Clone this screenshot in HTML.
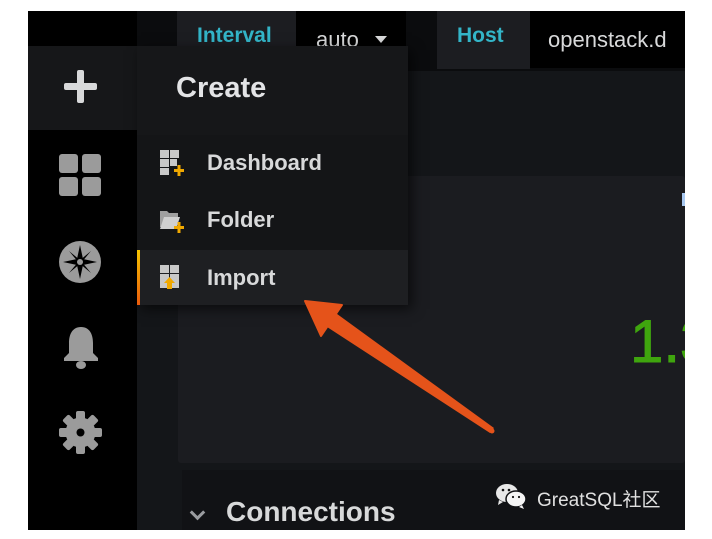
<!DOCTYPE html>
<html><head><meta charset="utf-8"><style>
*{margin:0;padding:0;box-sizing:border-box}
body{width:712px;height:539px;background:#fff;position:relative;overflow:hidden;font-family:"Liberation Sans",sans-serif}
.a{position:absolute}
.b{font-weight:bold}
</style></head><body>
<div class="a" style="left:28px;top:11px;width:657px;height:519px;background:#141619"></div>
<!-- top bar -->
<div class="a" style="left:137px;top:11px;width:548px;height:60px;background:#0b0c0e"></div>
<div class="a" style="left:177px;top:11px;width:119px;height:58px;background:#1c1d21"></div>
<div class="a b" style="left:197px;top:24px;color:#33b5c8;font-size:21px">Interval</div>
<div class="a" style="left:296px;top:11px;width:110px;height:58px;background:#000"></div>
<div class="a" style="left:316px;top:27px;color:#d8d9da;font-size:22px">auto</div>
<div class="a" style="left:375px;top:36px;width:0;height:0;border-left:6px solid transparent;border-right:6px solid transparent;border-top:7px solid #d8d9da"></div>
<div class="a" style="left:437px;top:11px;width:93px;height:58px;background:#1c1d21"></div>
<div class="a b" style="left:457px;top:24px;color:#33b5c8;font-size:21px">Host</div>
<div class="a" style="left:530px;top:11px;width:155px;height:57px;background:#000"></div>
<div class="a" style="left:548px;top:27px;color:#d8d9da;font-size:22px;white-space:nowrap;width:137px;overflow:hidden">openstack.d</div>
<!-- main panel -->
<div class="a" style="left:178px;top:176px;width:507px;height:287px;background:#1b1c20;border-radius:3px"></div>
<div class="a" style="left:682px;top:193px;width:3px;height:13px;background:#a8c8f0"></div>
<div class="a" style="left:630px;top:312px;color:#3fa50e;font-size:60px;line-height:60px;white-space:nowrap;width:55px;overflow:hidden;-webkit-text-stroke:1px #3fa50e">1.3</div>
<div class="a" style="left:182px;top:470px;width:503px;height:60px;background:#111215"></div>
<div class="a" style="left:192px;top:507px;width:11px;height:11px;border-right:3px solid #9a9ca0;border-bottom:3px solid #9a9ca0;transform:rotate(45deg)"></div>
<div class="a b" style="left:226px;top:496px;color:#d8d9da;font-size:28px">Connections</div>
<!-- sidebar -->
<div class="a" style="left:28px;top:11px;width:109px;height:519px;background:#000"></div>
<div class="a" style="left:28px;top:46px;width:109px;height:84px;background:#161719"></div>
<div class="a" style="left:64px;top:83px;width:33px;height:7px;background:#d8d9da;border-radius:2px"></div>
<div class="a" style="left:77px;top:70px;width:7px;height:33px;background:#d8d9da;border-radius:2px"></div>
<svg class="a" style="left:58px;top:153px" width="45" height="45"><g fill="#9b9b9b"><rect x="1" y="1" width="19" height="19" rx="3"/><rect x="24" y="1" width="19" height="19" rx="3"/><rect x="1" y="24" width="19" height="19" rx="3"/><rect x="24" y="24" width="19" height="19" rx="3"/></g></svg>
<svg class="a" style="left:58px;top:240px" width="44" height="44"><circle cx="22" cy="22" r="21" fill="#9b9b9b"/><path d="M22 5L25 19L39 22L25 25L22 39L19 25L5 22L19 19Z" fill="#000"/><path d="M11 11L23 21L33 33L21 23Z" fill="#000"/><path d="M33 11L23 23L11 33L21 21Z" fill="#000"/><circle cx="22" cy="22" r="3" fill="#9b9b9b"/></svg>
<svg class="a" style="left:62px;top:325px" width="38" height="45"><path d="M19 2C10 2 7 10 7 18L7 28L2 33L2 36L36 36L36 33L31 28L31 18C31 10 28 2 19 2Z" fill="#9b9b9b"/><ellipse cx="19" cy="40" rx="5" ry="4" fill="#9b9b9b"/></svg>
<svg class="a" style="left:58px;top:410px" width="45" height="45"><g fill="#9b9b9b"><circle cx="22.5" cy="22.5" r="15"/><rect x="18" y="1" width="9" height="43" rx="2"/><rect x="18" y="1" width="9" height="43" rx="2" transform="rotate(45 22.5 22.5)"/><rect x="18" y="1" width="9" height="43" rx="2" transform="rotate(90 22.5 22.5)"/><rect x="18" y="1" width="9" height="43" rx="2" transform="rotate(135 22.5 22.5)"/></g><circle cx="22.5" cy="22.5" r="4" fill="#000"/></svg>
<!-- menu -->
<div class="a" style="left:137px;top:46px;width:271px;height:259px;background:#141517;box-shadow:4px 4px 12px rgba(0,0,0,.6)"></div>
<div class="a" style="left:137px;top:46px;width:271px;height:89px;background:#161719"></div>
<div class="a b" style="left:176px;top:72px;color:#e3e4e6;font-size:29px">Create</div>
<div class="a" style="left:137px;top:250px;width:271px;height:55px;background:#1e1f22"></div>
<div class="a" style="left:137px;top:250px;width:3px;height:55px;background:linear-gradient(#f5c400,#eb5b0c)"></div>
<svg class="a" style="left:160px;top:150px" width="28" height="28"><g fill="#c8c8c8"><rect x="0" y="0" width="9" height="8"/><rect x="10" y="0" width="9" height="8"/><rect x="0" y="9" width="9" height="8"/><rect x="10" y="9" width="7" height="7"/><rect x="0" y="18" width="9" height="7"/></g><path d="M19 15v11M14 20.5h10" stroke="#f0a800" stroke-width="3"/></svg>
<div class="a b" style="left:207px;top:150px;color:#d8d9da;font-size:22px">Dashboard</div>
<svg class="a" style="left:160px;top:207px" width="28" height="28"><path d="M0 4h7l2 2h9v6H5L1 20H0Z" fill="#a0a0a0"/><path d="M4 10h16l-4 12H0Z" fill="#d0d0d0"/><path d="M19 15v11M14 20.5h10" stroke="#f0a800" stroke-width="3"/></svg>
<div class="a b" style="left:207px;top:207px;color:#d8d9da;font-size:22px">Folder</div>
<svg class="a" style="left:160px;top:265px" width="28" height="28"><g fill="#c8c8c8"><rect x="0" y="0" width="9" height="8"/><rect x="10" y="0" width="9" height="8"/><path d="M0 9h9v14H0Z"/><path d="M10 9h9v14h-9Z"/></g><path d="M9.5 12L4 18h3v6h5v-6h3Z" fill="#f0a800"/></svg>
<div class="a b" style="left:207px;top:265px;color:#d8d9da;font-size:22px">Import</div>
<!-- arrow -->
<svg class="a" style="left:0;top:0" width="712" height="539"><path d="M324 325L333 311L494 428L490 433Z" fill="#e5531a"/><circle cx="492" cy="431" r="2.5" fill="#e5531a"/><path d="M305 301L342 305L321 336Z" fill="#e5531a" stroke="#e5531a" stroke-width="2" stroke-linejoin="round"/></svg>
<!-- watermark -->
<svg class="a" style="left:495px;top:482px" width="32" height="28"><ellipse cx="12" cy="11" rx="11" ry="9" fill="#e8e8e8"/><path d="M4 18l-1 5 5-3Z" fill="#e8e8e8"/><ellipse cx="21" cy="17" rx="10" ry="8" fill="#f5f5f5" stroke="#111215" stroke-width="1.5"/><path d="M27 23l2 4-5-2Z" fill="#f5f5f5"/><circle cx="8" cy="8" r="1.3" fill="#111"/><circle cx="14" cy="8" r="1.3" fill="#111"/><circle cx="18" cy="15" r="1.1" fill="#111"/><circle cx="24" cy="15" r="1.1" fill="#111"/></svg>
<div class="a" style="left:537px;top:485px;color:#e0e0e0;font-size:19px;font-family:'Liberation Sans','Noto Sans CJK SC',sans-serif">GreatSQL社区</div>
</body></html>
